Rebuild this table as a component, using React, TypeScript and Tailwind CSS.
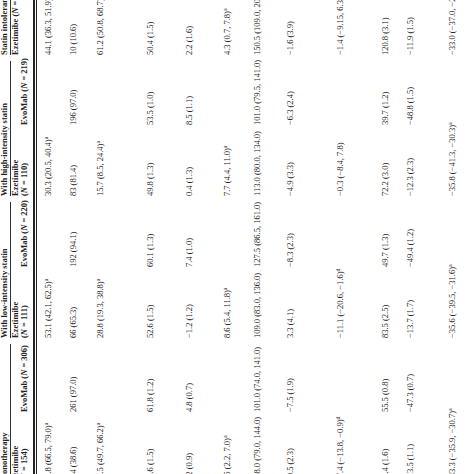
type Cell = [string, string?];

// grid starts at table x = -8; first column is partly cut off, as in the source
const cols = "grid grid-cols-[70px_74px_71px_71px_71px_70px_120px]";

const groups = [
  { label: "Monotherapy", cls: "w-[138px]" },
  { label: "With low-intensity statin", cls: "ml-[6px] w-[136px]" },
  { label: "With high-intensity statin", cls: "ml-[6px] w-[135px]" },
  { label: "Statin intolerance", cls: "ml-[6px] w-[120px]" },
];

const heads = [
  { drug: "Ezetimibe", n: "154", two: true },
  { drug: "EvoMab", n: "306", two: false },
  { drug: "Ezetimibe", n: "111", two: true },
  { drug: "EvoMab", n: "220", two: false },
  { drug: "Ezetimibe", n: "110", two: true },
  { drug: "EvoMab", n: "219", two: false },
  { drug: "Ezetimibe", n: "102", two: false, top: true },
];

const rows: { h: string; cells: Cell[] }[] = [
  { h: "h-[25px]", cells: [["73.8 (66.5, 79.0)", "a"], [""], ["53.1 (42.1, 62.5)", "a"], [""], ["30.3 (20.5, 40.4)", "a"], [""], ["44.1 (36.3, 51.9)", "a"]] },
  { h: "h-[27px]", cells: [["164 (38.6)"], ["261 (97.0)"], ["66 (65.3)"], ["192 (94.1)"], ["83 (81.4)"], ["196 (97.0)"], ["10 (10.6)"]] },
  { h: "h-[50px]", cells: [["57.5 (49.7, 66.2)", "a"], [""], ["28.8 (19.3, 38.8)", "a"], [""], ["15.7 (8.5, 24.4)", "a"], [""], ["61.2 (50.8, 68.7)", "a"]] },
  { h: "h-[39px]", cells: [["56.6 (1.5)"], ["61.8 (1.2)"], ["52.6 (1.5)"], ["60.1 (1.3)"], ["49.8 (1.3)"], ["53.5 (1.0)"], ["50.4 (1.5)"]] },
  { h: "h-[38px]", cells: [["0.2 (0.9)"], ["4.8 (0.7)"], ["−1.2 (1.2)"], ["7.4 (1.0)"], ["0.4 (1.3)"], ["8.5 (1.1)"], ["2.2 (1.6)"]] },
  { h: "h-[30px]", cells: [["4.6 (2.2, 7.0)", "a"], [""], ["8.6 (5.4, 11.8)", "a"], [""], ["7.7 (4.4, 11.0)", "a"], [""], ["4.3 (0.7, 7.8)", "a"]] },
  { h: "h-[33px]", cells: [["108.0 (79.0, 144.0)"], ["101.0 (74.0, 141.0)"], ["109.0 (83.0, 136.0)"], ["127.5 (86.5, 161.0)"], ["113.0 (80.0, 134.0)"], ["101.0 (79.5, 141.0)"], ["150.5 (109.0, 201.0)"]] },
  { h: "h-[50px]", cells: [["−0.5 (2.3)"], ["−7.5 (1.9)"], ["3.3 (4.1)"], ["−8.3 (2.3)"], ["−4.9 (3.3)"], ["−6.3 (2.4)"], ["−1.6 (3.9)"]] },
  { h: "h-[45px]", cells: [["−7.4 (−13.8, −0.9)", "d"], [""], ["−11.1 (−20.6, −1.6)", "d"], [""], ["−0.3 (−8.4, 7.8)"], [""], ["−1.4 (−9.15, 6.3)"]] },
  { h: "h-[25px]", cells: [["82.4 (1.6)"], ["55.5 (0.8)"], ["83.5 (2.5)"], ["49.7 (1.3)"], ["72.2 (3.0)"], ["39.7 (1.2)"], ["120.8 (3.1)"]] },
  { h: "h-[42px]", cells: [["−13.5 (1.1)"], ["−47.3 (0.7)"], ["−13.7 (1.7)"], ["−49.4 (1.2)"], ["−12.3 (2.3)"], ["−48.8 (1.5)"], ["−11.9 (1.5)"]] },
  { h: "h-[30px]", cells: [["−33.3 (−35.9, −30.7)", "a"], [""], ["−35.6 (−39.5, −31.6)", "a"], [""], ["−35.8 (−41.3, −30.3)", "a"], [""], ["−33.0 (−37.0, −29.0)", "a"]] },
];

function N({ n }: { n: string }) {
  return (
    <span>
      (<i>N</i> = {n})
    </span>
  );
}

export default function App() {
  return (
    <div className="w-[474px] h-[474px] overflow-hidden bg-white">
      <div className="w-[474px] h-[474px] -rotate-90 overflow-hidden bg-white font-['Liberation_Serif',serif] text-[8.5px] text-[#222]">
        <div className="ml-[-8px] w-[560px]">
          {/* group headings */}
          <div className="flex font-bold leading-[9px]">
            {groups.map((g) => (
              <div key={g.label} className={`${g.cls} shrink-0 pb-[1px] border-b border-[#333] whitespace-nowrap`}>
                {g.label}
              </div>
            ))}
          </div>

          {/* column headings */}
          <div className={`${cols} items-end font-bold leading-[9px] pb-[4px]`}>
            {heads.map((h, i) => (
              <div key={i} className={`whitespace-nowrap ${h.top ? "self-start" : ""}`}>
                {h.two ? (
                  <div className="flex flex-col">
                    <span>{h.drug}</span>
                    <N n={h.n} />
                  </div>
                ) : (
                  <span>
                    {h.drug} <N n={h.n} />
                  </span>
                )}
              </div>
            ))}
          </div>
          <div className="h-[4px] border-t-2 border-b border-[#222]" />

          {/* body */}
          <div className="pt-[6px] leading-[10px]">
            {rows.map((r, ri) => (
              <div key={ri} className={`${cols} ${r.h} items-start`}>
                {r.cells.map(([t, note], ci) => (
                  <div key={ci} className="whitespace-nowrap">
                    {t}
                    {note && <sup className="text-[6px]">{note}</sup>}
                  </div>
                ))}
              </div>
            ))}
          </div>
        </div>
      </div>
    </div>
  );
}
